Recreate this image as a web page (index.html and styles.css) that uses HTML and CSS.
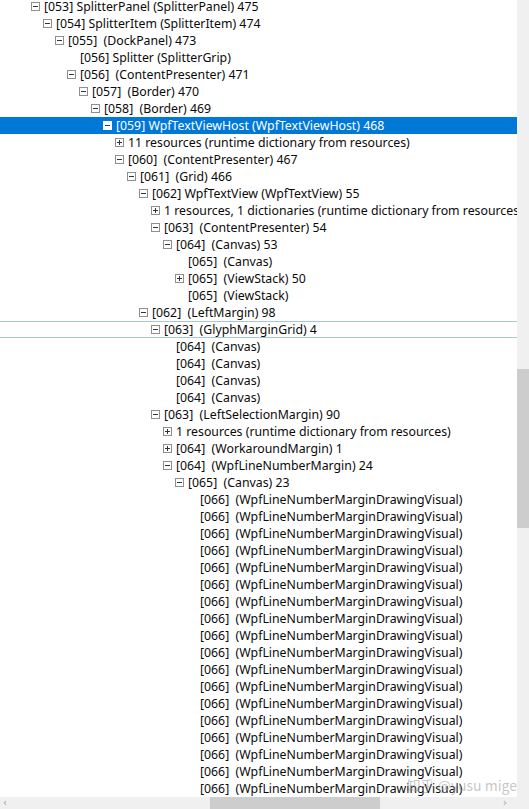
FILE: index.html
```html
<!DOCTYPE html>
<html>
<head>
<meta charset="utf-8">
<link rel="stylesheet" href="styles.css">
</head>
<body>
<div class="frame">
  <div class="view">
    <div class="tree">
      <div class="row l0"><span class="ex minus"></span><span class="t">[053] SplitterPanel (SplitterPanel) 475</span></div>
      <div class="row l1"><span class="ex minus"></span><span class="t">[054] SplitterItem (SplitterItem) 474</span></div>
      <div class="row l2"><span class="ex minus"></span><span class="t">[055]  (DockPanel) 473</span></div>
      <div class="row l3"><span class="ex none"></span><span class="t">[056] Splitter (SplitterGrip)</span></div>
      <div class="row l3"><span class="ex minus"></span><span class="t">[056]  (ContentPresenter) 471</span></div>
      <div class="row l4"><span class="ex minus"></span><span class="t">[057]  (Border) 470</span></div>
      <div class="row l5"><span class="ex minus"></span><span class="t">[058]  (Border) 469</span></div>
      <div class="row l6 sel"><span class="ex minus"></span><span class="t">[059] WpfTextViewHost (WpfTextViewHost) 468</span></div>
      <div class="row l7"><span class="ex plus"></span><span class="t">11 resources (runtime dictionary from resources)</span></div>
      <div class="row l7"><span class="ex minus"></span><span class="t">[060]  (ContentPresenter) 467</span></div>
      <div class="row l8"><span class="ex minus"></span><span class="t">[061]  (Grid) 466</span></div>
      <div class="row l9"><span class="ex minus"></span><span class="t">[062] WpfTextView (WpfTextView) 55</span></div>
      <div class="row l10"><span class="ex plus"></span><span class="t">1 resources, 1 dictionaries (runtime dictionary from resources)</span></div>
      <div class="row l10"><span class="ex minus"></span><span class="t">[063]  (ContentPresenter) 54</span></div>
      <div class="row l11"><span class="ex minus"></span><span class="t">[064]  (Canvas) 53</span></div>
      <div class="row l12"><span class="ex none"></span><span class="t">[065]  (Canvas)</span></div>
      <div class="row l12"><span class="ex plus"></span><span class="t">[065]  (ViewStack) 50</span></div>
      <div class="row l12"><span class="ex none"></span><span class="t">[065]  (ViewStack)</span></div>
      <div class="row l9"><span class="ex minus"></span><span class="t">[062]  (LeftMargin) 98</span></div>
      <div class="row l10 hover"><span class="ex minus"></span><span class="t">[063]  (GlyphMarginGrid) 4</span></div>
      <div class="row l11"><span class="ex none"></span><span class="t">[064]  (Canvas)</span></div>
      <div class="row l11"><span class="ex none"></span><span class="t">[064]  (Canvas)</span></div>
      <div class="row l11"><span class="ex none"></span><span class="t">[064]  (Canvas)</span></div>
      <div class="row l11"><span class="ex none"></span><span class="t">[064]  (Canvas)</span></div>
      <div class="row l10"><span class="ex minus"></span><span class="t">[063]  (LeftSelectionMargin) 90</span></div>
      <div class="row l11"><span class="ex plus"></span><span class="t">1 resources (runtime dictionary from resources)</span></div>
      <div class="row l11"><span class="ex plus"></span><span class="t">[064]  (WorkaroundMargin) 1</span></div>
      <div class="row l11"><span class="ex minus"></span><span class="t">[064]  (WpfLineNumberMargin) 24</span></div>
      <div class="row l12"><span class="ex minus"></span><span class="t">[065]  (Canvas) 23</span></div>
      <div class="row l13"><span class="ex none"></span><span class="t">[066]  (WpfLineNumberMarginDrawingVisual)</span></div>
      <div class="row l13"><span class="ex none"></span><span class="t">[066]  (WpfLineNumberMarginDrawingVisual)</span></div>
      <div class="row l13"><span class="ex none"></span><span class="t">[066]  (WpfLineNumberMarginDrawingVisual)</span></div>
      <div class="row l13"><span class="ex none"></span><span class="t">[066]  (WpfLineNumberMarginDrawingVisual)</span></div>
      <div class="row l13"><span class="ex none"></span><span class="t">[066]  (WpfLineNumberMarginDrawingVisual)</span></div>
      <div class="row l13"><span class="ex none"></span><span class="t">[066]  (WpfLineNumberMarginDrawingVisual)</span></div>
      <div class="row l13"><span class="ex none"></span><span class="t">[066]  (WpfLineNumberMarginDrawingVisual)</span></div>
      <div class="row l13"><span class="ex none"></span><span class="t">[066]  (WpfLineNumberMarginDrawingVisual)</span></div>
      <div class="row l13"><span class="ex none"></span><span class="t">[066]  (WpfLineNumberMarginDrawingVisual)</span></div>
      <div class="row l13"><span class="ex none"></span><span class="t">[066]  (WpfLineNumberMarginDrawingVisual)</span></div>
      <div class="row l13"><span class="ex none"></span><span class="t">[066]  (WpfLineNumberMarginDrawingVisual)</span></div>
      <div class="row l13"><span class="ex none"></span><span class="t">[066]  (WpfLineNumberMarginDrawingVisual)</span></div>
      <div class="row l13"><span class="ex none"></span><span class="t">[066]  (WpfLineNumberMarginDrawingVisual)</span></div>
      <div class="row l13"><span class="ex none"></span><span class="t">[066]  (WpfLineNumberMarginDrawingVisual)</span></div>
      <div class="row l13"><span class="ex none"></span><span class="t">[066]  (WpfLineNumberMarginDrawingVisual)</span></div>
      <div class="row l13"><span class="ex none"></span><span class="t">[066]  (WpfLineNumberMarginDrawingVisual)</span></div>
      <div class="row l13"><span class="ex none"></span><span class="t">[066]  (WpfLineNumberMarginDrawingVisual)</span></div>
      <div class="row l13"><span class="ex none"></span><span class="t">[066]  (WpfLineNumberMarginDrawingVisual)</span></div>
    </div>
    <div class="watermark">知乎 @yusu mige</div>
  </div>
  <div class="vscroll"><div class="vthumb"></div></div>
  <div class="hscroll">
    <span class="arrow">&#8249;</span>
    <div class="hthumb"></div>
    <span class="arrow right">&#8250;</span>
  </div>
  <div class="corner"></div>
</div>
</body>
</html>
```

FILE: styles.css
```css
html, body {
  margin: 0;
  padding: 0;
  background: #ffffff;
}
.frame {
  width: 529px;
  height: 809px;
  display: grid;
  grid-template-columns: 517px 12px;
  grid-template-rows: 797px 12px;
  overflow: hidden;
}
.view {
  position: relative;
  overflow: hidden;
  background: #ffffff;
}
.tree {
  margin-top: -2px;
  font-family: "Noto Sans", "Noto Sans CJK SC", sans-serif;
  font-size: 12.3px;
  color: #0a0a0a;
}
.row {
  height: 17px;
  display: flex;
  align-items: center;
  white-space: pre;
  box-sizing: border-box;
}
.row .t {
  line-height: 17px;
}
.ex {
  flex: none;
  width: 9px;
  height: 9px;
  margin-right: 4px;
  box-sizing: border-box;
  position: relative;
}
.ex.minus, .ex.plus {
  border: 1px solid #8f8f8f;
  background: #ffffff;
}
.ex.minus::before, .ex.plus::before {
  content: "";
  position: absolute;
  left: 1px;
  top: 3px;
  width: 5px;
  height: 1px;
  background: #333333;
}
.ex.plus::after {
  content: "";
  position: absolute;
  left: 3px;
  top: 1px;
  width: 1px;
  height: 5px;
  background: #333333;
}
.sel {
  background: #0078d7;
  color: #ffffff;
}
.sel .ex.minus {
  border-color: #ffffff;
}
.sel .ex.minus::before {
  background: #0b3f7a;
}
.hover {
  border-top: 1px solid #a4c9df;
  border-bottom: 1px solid #a4c9df;
}
.l0 { padding-left: 31px; }
.l1 { padding-left: 43px; }
.l2 { padding-left: 55px; }
.l3 { padding-left: 67px; }
.l4 { padding-left: 79px; }
.l5 { padding-left: 91px; }
.l6 { padding-left: 103px; }
.l7 { padding-left: 115px; }
.l8 { padding-left: 127px; }
.l9 { padding-left: 139px; }
.l10 { padding-left: 151px; }
.l11 { padding-left: 163px; }
.l12 { padding-left: 175px; }
.l13 { padding-left: 187px; }
.watermark {
  position: absolute;
  right: 0;
  bottom: 2px;
  font-family: "Noto Sans CJK SC", "Noto Sans", sans-serif;
  font-size: 14px;
  color: rgba(160, 160, 160, 0.6);
  white-space: nowrap;
}
.vscroll {
  background: #f0f0f0;
  display: flex;
  flex-direction: column;
  padding-top: 369px;
  box-sizing: border-box;
}
.vthumb {
  width: 12px;
  height: 159px;
  background: #cdcdcd;
}
.hscroll {
  background: #f0f0f0;
  display: flex;
  align-items: center;
  position: relative;
}
.hthumb {
  margin-left: 199px;
  width: 170px;
  height: 12px;
  background: #cdcdcd;
}
.arrow {
  font-family: "DejaVu Sans", sans-serif;
  font-size: 10px;
  color: #a0a0a0;
  width: 8px;
  padding-left: 3px;
  line-height: 12px;
}
.arrow.right {
  margin-left: auto;
  padding-right: 6px;
}
.corner {
  background: #f0f0f0;
}
```
